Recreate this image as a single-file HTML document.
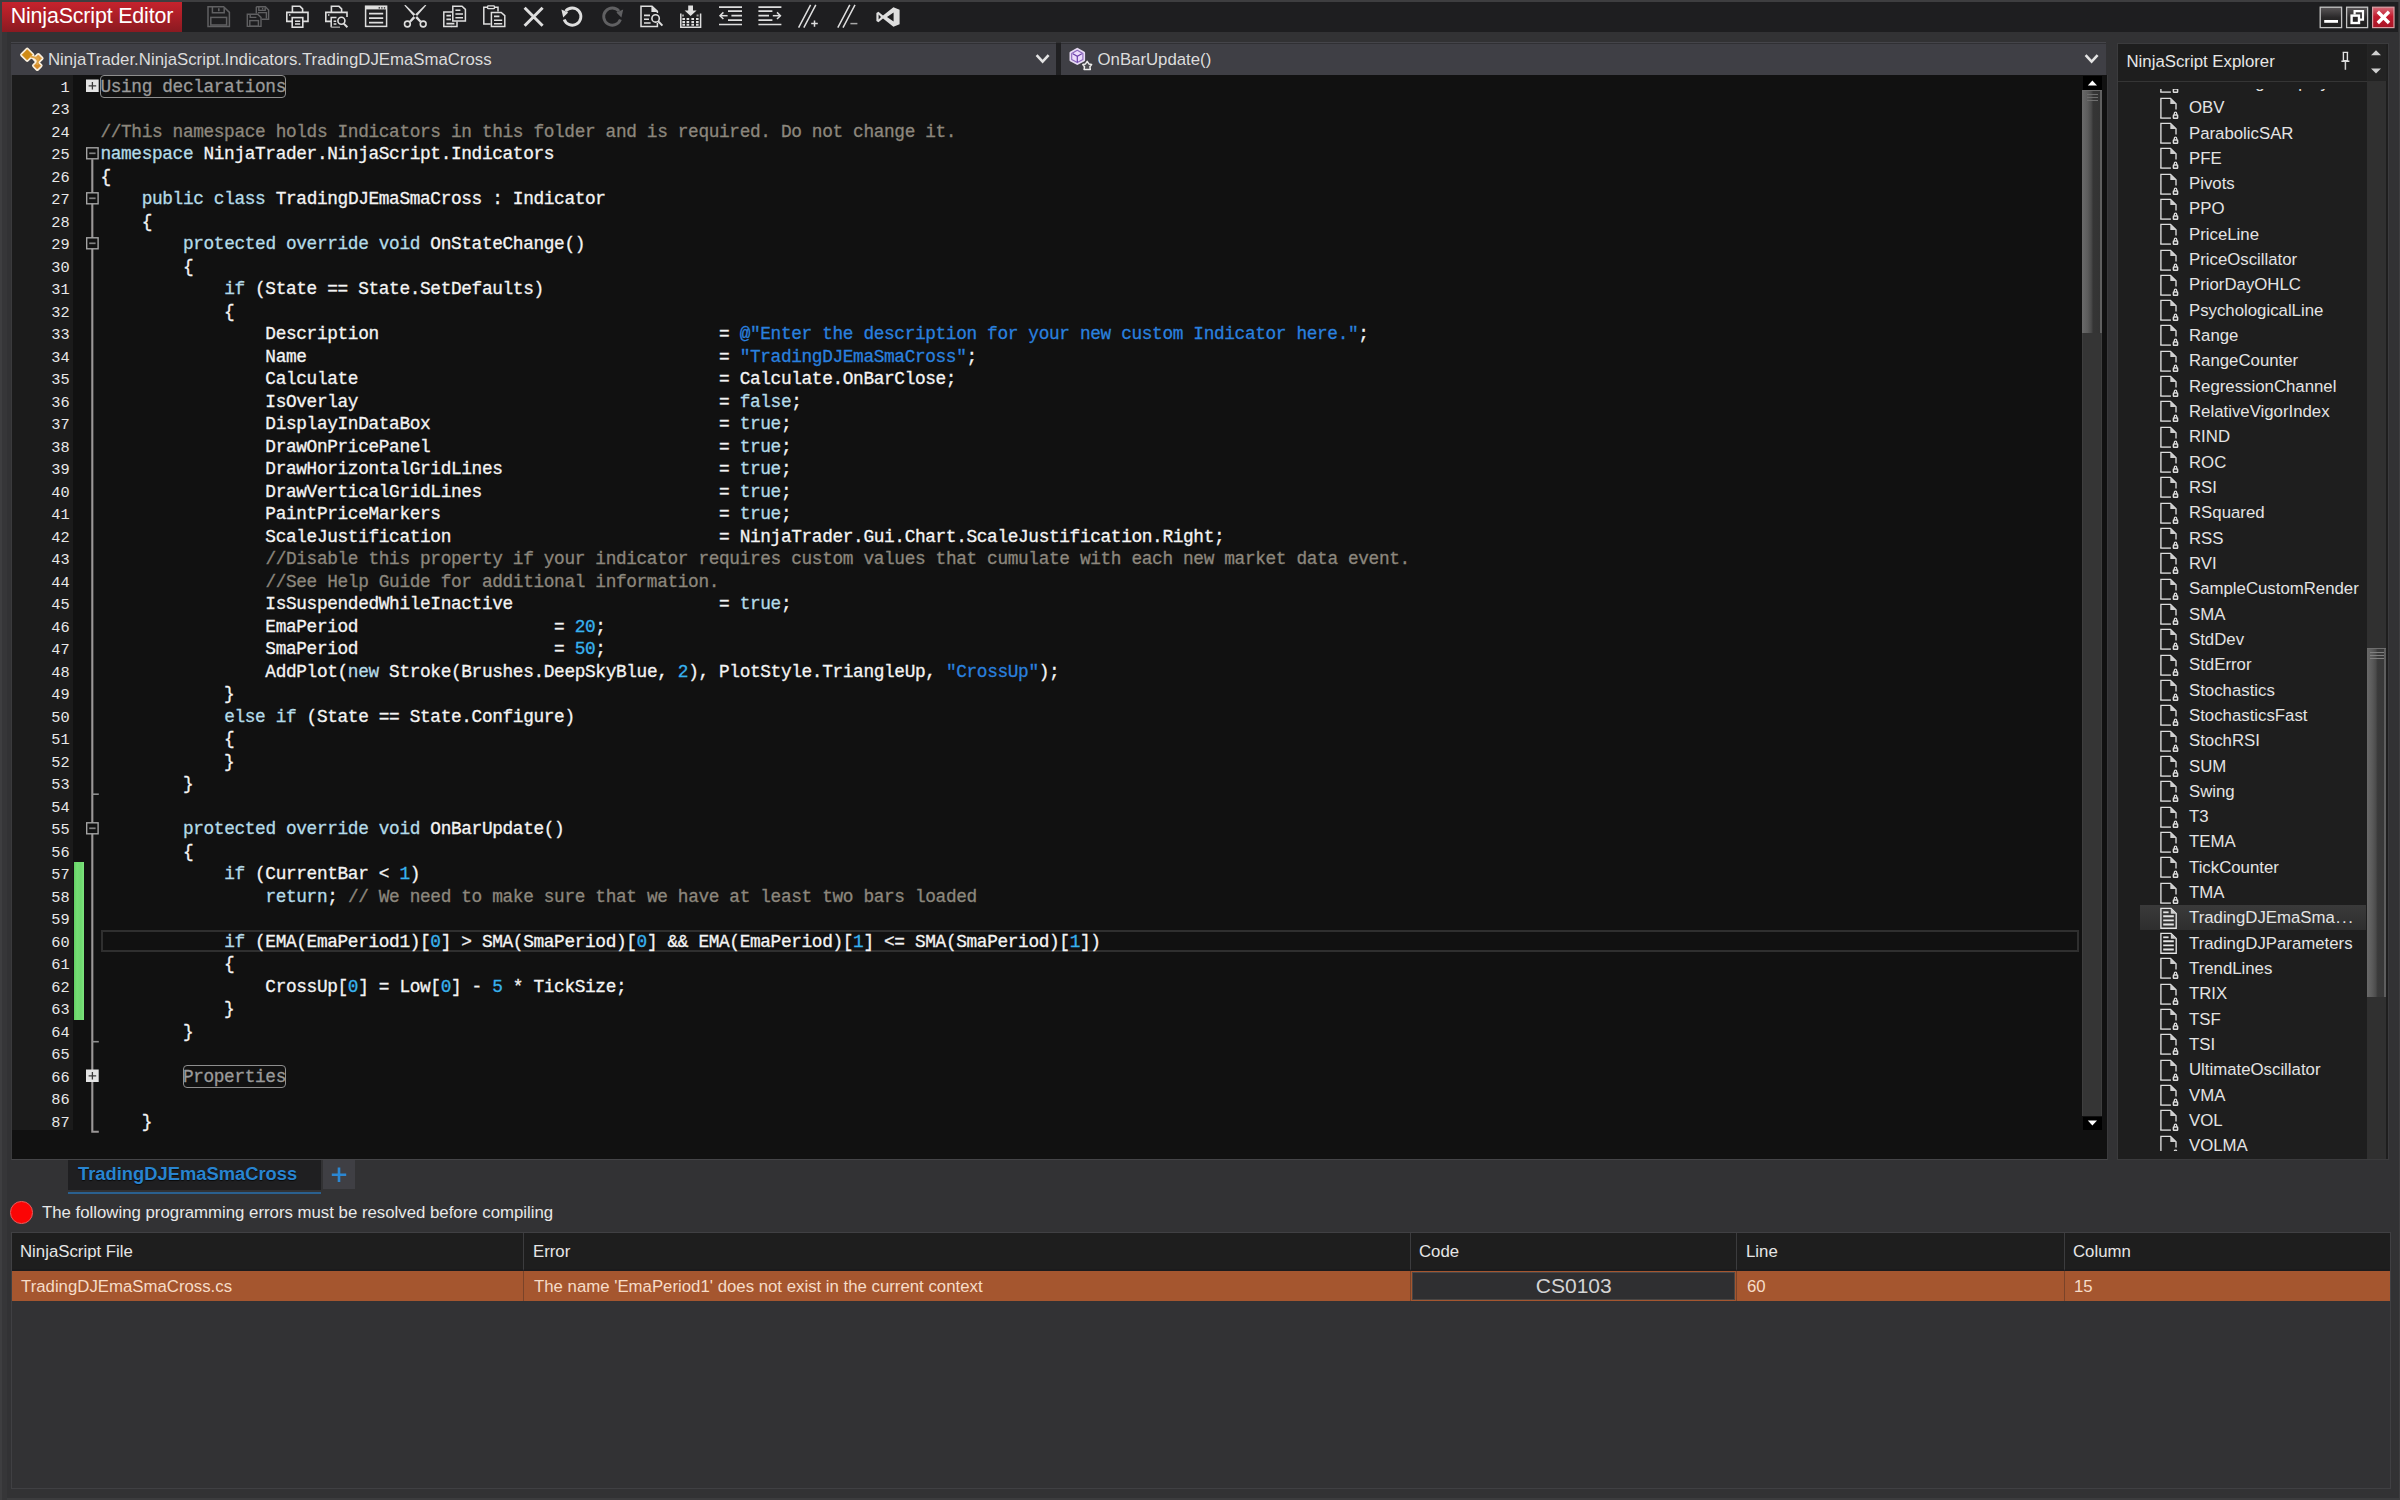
<!DOCTYPE html>
<html lang="en">
<head>
<meta charset="utf-8">
<title>NinjaScript Editor</title>
<style>
*{box-sizing:border-box;margin:0;padding:0}
html,body{width:2400px;height:1500px;overflow:hidden;background:#323234}
body{position:relative;font-family:"Liberation Sans",sans-serif;color:#e6e6e6;-webkit-font-smoothing:antialiased}
.abs{position:absolute}
#topstrip{left:0;top:0;width:2400px;height:2px;background:#3e3e40}
#leftstrip{left:0;top:0;width:2px;height:1500px;background:#3e3e40}
#leftstrip2{left:2px;top:32px;width:4.5px;height:1468px;background:#363638}
#rightstrip{left:2398.6px;top:0;width:1.4px;height:1500px;background:#3e3e40}
#botstrip{left:0;top:1498px;width:2400px;height:2px;background:#3c3c3e}
#titlebar{left:2px;top:2px;width:2396px;height:30px;background:#1e1e20}
#title{left:2px;top:2px;width:180px;height:30px;background:linear-gradient(#c5232d 0%,#b01f28 40%,#8a1a21 100%);color:#fff;font-size:21.4px;line-height:28.4px;padding-left:8.7px;white-space:nowrap;letter-spacing:-0.15px}
.dd{top:42px;height:33px;background:#3f3f45;border-top:1.4px solid #45454a;box-shadow:inset 0 1px 0 #303034;font-size:16.8px;line-height:33.4px;color:#dcdcdc;white-space:nowrap}
#dd1{left:11px;width:1045px}
#dd2{left:1061px;width:1045px}
#ddgap{left:1056px;top:43px;width:5px;height:32px;background:#202022}
#editor{left:11px;top:75px;width:2096.5px;height:1084.5px;background:#111111;border-left:1px solid #3a3a3c;border-right:1px solid #3a3a3c;border-bottom:1px solid #454548;overflow:hidden}
#gutter{left:12px;top:75px;width:61px;height:1055px;background:#1b1b1b}
.ln,.cl{position:absolute;font-family:"Liberation Mono","DejaVu Sans Mono",monospace;white-space:pre;height:22.5px;line-height:22.5px}
.cl{left:100.4px;font-size:17.800px;letter-spacing:-0.3598px;color:#f4f4f4;-webkit-text-stroke:0.3px}
.ln{left:12px;width:57.6px;text-align:right;font-size:15.3px;color:#e8e8e8}
.cl.f{color:#9a9a9a}
.k{color:#b4dbe8}.s{color:#2a80df}.n{color:#38b2ee}.c{color:#8c877d}
.fold{position:absolute;font-family:"Liberation Mono",monospace;white-space:pre;font-size:17.800px;line-height:22.5px;color:#999;border:1.6px solid #8e8e8e;border-radius:4px;height:22.6px}
.et{position:absolute;left:2189px;font-size:16.8px;line-height:20px;color:#e4e4e4;white-space:nowrap}
.eic{position:absolute;left:2159px}
.esel{position:absolute;left:2140px;width:226px;height:25.4px;background:linear-gradient(#3a3a3a,#2e2e2e)}
#explorer{left:2117px;top:42.5px;width:272px;height:1117.5px;background:#1e1e1e;border:1px solid #3b3b3d;overflow:hidden}
#exhead{left:2118px;top:43.5px;width:249px;height:38.4px;background:#1e1e1e;border-bottom:1.4px solid #353535;font-size:16.8px;line-height:36px;padding-left:8.5px;color:#e6e6e6}
#exclip{left:2118px;top:89.4px;width:249px;height:1061.6px;overflow:hidden}
#exclip > *{margin-left:-2118px;margin-top:-89.4px}
#exscroll{left:2366.8px;top:43.5px;width:19.6px;height:1115px;background:#303030}
#exthumb{left:2367.2px;top:648px;width:18.8px;height:348.5px;background:linear-gradient(90deg,#6a6a6a 0,#5a5a5a 28%,#4c4c4c 46%,#3a3a3a 56%,#383838 90%,#5e5e5e 92%,#5e5e5e 100%);border-top:1px solid #6e6e6e}
#vtrack{left:2082.3px;top:90px;width:19.8px;height:1026px;background:#353535;border-left:1px solid #3e3e3e;border-right:1px solid #3e3e3e}
#vthumb{left:2082.4px;top:90px;width:19.6px;height:243px;background:linear-gradient(90deg,#6a6a6a 0,#5c5c5c 28%,#4a4a4a 46%,#353535 56%,#333 90%,#606060 92%,#606060 100%);border-top:1px solid #6a6a6a}
.sbtn{left:2083px;width:18.5px;height:13.5px;background:#000}
#tab{left:68px;top:1159.5px;width:253px;height:30.5px;background:#1f1f21;color:#2884d0;text-shadow:0 1px 1px rgba(0,0,0,.7);font-weight:bold;font-size:18.35px;line-height:28px;padding-left:10px;white-space:nowrap}
#tabline{left:68px;top:1192px;width:253px;height:1.5px;background:#2a608f}
#plustab{left:323px;top:1160px;width:32px;height:29px;background:#3f3f44}
#errdot{left:10px;top:1201px;width:22.5px;height:22.5px;border-radius:50%;background:#fb0505;border:1.5px solid #e85c5c}
#errmsg{left:42px;top:1203px;font-size:16.8px;line-height:20px;color:#e8e8e8;white-space:nowrap}
#grid{left:10.6px;top:1232.2px;width:2380.4px;height:257.2px;border:1px solid #404043;background:#323234}
.th{position:absolute;top:1233.2px;height:38px;background:#1e1e1e;font-size:16.8px;line-height:38.4px;color:#e6e6e6;padding-left:8px;border-right:1px solid #3c3c3e;border-bottom:2.4px solid #1b1b1d}
.td{position:absolute;top:1271.2px;height:29.8px;background:#a5562f;font-size:16.8px;line-height:31.2px;color:#f6dcc8;padding-left:9px;border-right:1px solid #7a4329;white-space:nowrap}
#codecell{left:1412.4px;top:1271.6px;width:322.8px;height:28.6px;background:#2f2f31;border:1px solid #4a4644;border-top:1.5px solid #48484a;color:#d4d4d4;font-size:21px;line-height:26px;text-align:center;position:absolute}
#curline{left:101px;top:929.5px;width:1978px;height:22px;border:2px solid #2f2f2f;background:#111}
#greenbar{left:73.8px;top:862.2px;width:9.9px;height:157.6px;background:linear-gradient(90deg,#63cf63,#74de74 30%,#6ed86e 70%,#7ee47e)}
</style>
</head>
<body>
<svg width="0" height="0" style="position:absolute">
<defs>
<g id="il" fill="none" stroke="#dedede" stroke-width="1.35">
<path d="M1.9,21.1V1.3H11.5L17,6.8V12.6"/><path d="M11.3,1.6V7H16.8Z" fill="#cfcfcf" stroke="none"/><path d="M1.2,21.1H11.9"/>
<rect x="14.4" y="18.1" width="4.2" height="3.2" rx="0.5" stroke-width="1.5"/><path d="M15.3,17.8V16.4a1.2,1.2 0 0 1 2.4,0V17.8" stroke-width="1.3"/>
</g>
<g id="iu" fill="none" stroke="#e4e4e4" stroke-width="1.35">
<path d="M1.9,21.2V1.4H12L17.2,6.6V21.2Z"/><path d="M11.8,1.7V6.8H16.9Z" fill="#cfcfcf" stroke="none"/>
<path d="M4.2,9.2H14.8M4.2,13.4H14.8M4.2,17.5H14.8" stroke-width="1.9"/><path d="M4.2,5.3H9.6" stroke-width="1.8"/>
</g>
</defs>
</svg>

<div id="topstrip" class="abs"></div>
<div id="botstrip" class="abs"></div>
<div id="titlebar" class="abs"></div>
<div id="title" class="abs">NinjaScript Editor</div>
<div id="leftstrip" class="abs"></div>
<div id="leftstrip2" class="abs"></div>
<div id="rightstrip" class="abs"></div>

<svg class="abs" style="left:0;top:0" width="2400" height="34" viewBox="0 0 2400 34" fill="none" stroke-linejoin="miter">
<!-- 1 save (disabled) -->
<g stroke="#606062" stroke-width="1.5">
<path d="M208,6.8H223.6L229.4,12.4V26.4H208Z"/>
<path d="M212.4,7V12.8H224.2V8"/>
<path d="M218.8,8.2V11.2" stroke-width="1.6"/>
<rect x="210.8" y="17.4" width="15.8" height="7.6"/>
</g>
<!-- 2 save all (disabled) -->
<g stroke="#606062" stroke-width="1.4">
<path d="M256.3,6.8H265.4L268.6,10V19.2H261.5"/><path d="M256.3,6.8V13.6"/>
<path d="M258.8,7V10.4H265.2V7.6"/><path d="M262.6,7.8V9.6"/>
<path d="M258.6,13.6V12.6H266.4V18.6"/>
<path d="M247.3,14.2H257.6L261,17.4V26.4H247.3Z"/>
<path d="M250.2,14.4V17.4H256.4"/>
<rect x="249.8" y="20.6" width="8.6" height="5.6"/>
</g>
<!-- 3 print -->
<g stroke="#dedede" stroke-width="1.6">
<path d="M292.4,12V6.3H300L302.6,8.8V12"/>
<path d="M292,21.4H286.8V12.4H308V21.4H303"/>
<rect x="292.2" y="17.6" width="10.6" height="9.6"/>
<path d="M295,21.3H300.2M295,24H300.2" stroke-width="1.5"/>
<path d="M289,15H290.4" stroke-width="1.4"/>
</g>
<!-- 4 print preview -->
<g stroke="#dedede" stroke-width="1.6">
<path d="M331.4,12V6.3H339L341.6,8.8V12"/>
<path d="M331,21.4H325.8V12.4H347V17"/>
<path d="M328,15H329.4" stroke-width="1.4"/>
<path d="M331.2,27.2V17.6H336.5" stroke-width="1.5"/>
<path d="M331.2,27.2H340" stroke-width="1.4" stroke="#9a9a9a"/>
<path d="M333.6,21.2H336.2M333.6,24H336.4" stroke-width="1.4"/>
<circle cx="341.4" cy="20.8" r="3.5" stroke-width="1.6"/>
<path d="M343.8,23.6L347.4,27.2" stroke-width="2"/>
</g>
<!-- 5 window list -->
<g stroke="#dedede" stroke-width="1.5">
<rect x="365.6" y="6.2" width="21" height="20.2"/>
<rect x="365.6" y="6.2" width="21" height="3.2" fill="#dedede" stroke="none"/>
<path d="M378.6,7.8H380M381.2,7.8H382.6M383.8,7.8H385.2" stroke-width="1.3" stroke="#1e1e20"/>
<path d="M369,13.6H383.2M369,18.1H383.2M369,22.6H383.2" stroke-width="1.7"/>
</g>
<!-- 6 scissors -->
<g stroke="#dedede">
<path d="M404.2,5.2L405.6,5L416.6,15.4L421.4,21L419.6,22.2L414.6,17.2ZM426.4,5.2L425,5L414,15.4L409.2,21L411,22.2L416,17.2Z" fill="#dedede" stroke="none"/>
<circle cx="407.4" cy="24" r="2.9" stroke-width="1.6"/>
<circle cx="423.2" cy="24" r="2.9" stroke-width="1.6"/>
</g>
<!-- 7 copy -->
<g stroke="#dedede" stroke-width="1.5">
<path d="M451.6,26.6H443.8V12H452"/>
<path d="M446.4,15.6H451M446.4,19.4H451M446.4,23.6H454.4" stroke-width="1.6"/>
<path d="M457,21.4V26.6H451"/>
<path d="M452.8,6.3H462L465.4,9.4V21H452.8Z" fill="#1e1e20"/>
<path d="M455.4,10.2H460.4M455.4,14H463M455.4,17.8H463" stroke-width="1.6"/>
</g>
<!-- 8 paste -->
<g stroke="#dedede" stroke-width="1.5">
<path d="M487.4,7.2H483.8V24H490.6"/>
<path d="M494.6,7.2H498V11.4"/>
<rect x="487.6" y="5.9" width="6.8" height="2.8" rx="0.6" stroke-width="1.3"/>
<path d="M491.4,12.4H501.2L504.8,15.6V26.6H491.4Z"/>
<path d="M494,16.4H499.4M494,20.2H502.2M494,23.8H502.2" stroke-width="1.6"/>
</g>
<!-- 9 delete X -->
<path d="M524.6,7.8L542.6,25.8M542.6,7.8L524.6,25.8" stroke="#dedede" stroke-width="3"/>
<!-- 10 undo -->
<g stroke="#dedede">
<path d="M565.6,11.2A8.6,8.6 0 1 1 564.2,19.6" stroke-width="2.9"/>
<path d="M561.4,9.6L568.2,12.6L563.2,17.4Z" fill="#dedede" stroke="none"/>
</g>
<!-- 11 redo (disabled) -->
<g stroke="#606062">
<path d="M619,11.2A8.6,8.6 0 1 0 620.4,19.6" stroke-width="2.9"/>
<path d="M623.2,9.6L616.4,12.6L621.4,17.4Z" fill="#606062" stroke="none"/>
</g>
<!-- 12 find in doc -->
<g stroke="#dedede" stroke-width="1.5">
<path d="M657.4,23V26.4H641V6.2H652L657.4,11.4V13"/>
<path d="M652,6.4V11.4H657" stroke-width="1.2" fill="#dedede"/>
<path d="M644,15.4H650M644,19.2H649M644,23H650.6" stroke-width="1.6"/>
<circle cx="655.6" cy="18.4" r="3.7" stroke-width="1.6"/>
<path d="M658.2,21.2L662.4,25.6" stroke-width="2"/>
</g>
<!-- 13 insert snippet -->
<g stroke="#dedede" stroke-width="1.5">
<path d="M688.2,5.4H693V10.4H696.6L690.6,16L684.6,10.4H688.2Z" fill="#dedede" stroke="none"/>
<path d="M680.8,13.4V27.2H700.6V13.4"/>
<path d="M683,14.4V16.4M697.6,14.4V16.4" stroke-width="2" stroke="#9c9c9c"/>
<path d="M682.4,19H685M686.6,19H689.2M691.4,19H694M696,19H698.6M682.4,22H685M686.6,22H689.2M691.4,22H694M696,22H698.6M682.4,24.8H685M686.6,24.8H689.2M691.4,24.8H694M696,24.8H698.6" stroke-width="1.9"/>
</g>
<!-- 14 outdent -->
<g stroke="#dedede" stroke-width="1.7">
<path d="M719,7.2H742M728,11.2H742M731.4,15.7H742M728,20.1H742M719,24.5H742"/>
<path d="M720,15.7H727.6" stroke-width="1.5"/>
<path d="M723.4,12.4L720,15.7L723.4,19" stroke-width="1.5"/>
</g>
<!-- 15 indent -->
<g stroke="#dedede" stroke-width="1.7">
<path d="M758.4,7.2H781.4M758.4,11.2H772.4M758.4,15.7H769M758.4,20.1H772.4M758.4,24.5H781.4"/>
<path d="M772.8,15.7H780.4" stroke-width="1.5"/>
<path d="M777,12.4L780.4,15.7L777,19" stroke-width="1.5"/>
</g>
<!-- 16 comment + -->
<g stroke="#dedede" stroke-width="1.5">
<path d="M798.6,27.6L810.6,4.8M803.8,27.6L815.8,4.8"/>
<path d="M811.2,23.6H817.8M814.5,20.4V26.8" stroke-width="1.5"/>
</g>
<!-- 17 comment - -->
<g stroke="#dedede" stroke-width="1.5">
<path d="M837.8,27.6L849.8,4.8M843,27.6L855,4.8"/>
<path d="M850.4,23.6H857.4" stroke-width="1.5" stroke="#a8a8a8"/>
</g>
<!-- 18 visual studio -->
<g>
<path d="M893.4,7.2L899.6,9.8V24.2L893.4,26.8L883,18.6L878.4,22.2L876.4,21V13L878.4,11.8L883,15.4ZM893.6,12.6L887,17L893.6,21.4ZM878.6,14.6V19.4L881,17Z" fill="#dedede" fill-rule="evenodd"/>
</g>
<!-- window buttons -->
<defs>
<linearGradient id="wb" x1="0" y1="0" x2="0" y2="1"><stop offset="0" stop-color="#5a5658"/><stop offset="0.5" stop-color="#2a2829"/><stop offset="1" stop-color="#1c1c1c"/></linearGradient>
<linearGradient id="wc" x1="0" y1="0" x2="0" y2="1"><stop offset="0" stop-color="#d56a78"/><stop offset="0.45" stop-color="#c41a2e"/><stop offset="1" stop-color="#a81526"/></linearGradient>
</defs>
<rect x="2320.2" y="7.2" width="21.4" height="20.4" fill="url(#wb)" stroke="#c4c4c4" stroke-width="1.3"/>
<rect x="2324.2" y="20" width="13.8" height="2.8" fill="#fff"/>
<rect x="2346.6" y="7.2" width="21" height="20.4" fill="url(#wb)" stroke="#c4c4c4" stroke-width="1.3"/>
<path d="M2354.6,14.6V11.2H2363V19.6H2359.4" stroke="#fff" stroke-width="2.2"/>
<rect x="2351.6" y="15.6" width="7.4" height="7.4" stroke="#fff" stroke-width="2.4"/>
<rect x="2372.6" y="7.2" width="21.4" height="20.4" fill="url(#wc)" stroke="#d9a0a6" stroke-width="1.2"/>
<path d="M2377.8,11.8L2389,23M2389,11.8L2377.8,23" stroke="#fff" stroke-width="3.4"/>
</svg>


<div id="dd1" class="abs dd"><span style="position:absolute;left:37px">NinjaTrader.NinjaScript.Indicators.TradingDJEmaSmaCross</span></div>
<div id="ddgap" class="abs"></div>
<div id="dd2" class="abs dd"><span style="position:absolute;left:36.5px">OnBarUpdate()</span></div>
<svg class="abs" style="left:0;top:43px" width="2400" height="32" viewBox="0 43 2400 32" fill="none">
<!-- class icon -->
<g stroke="#fbf0de" stroke-width="3.8" stroke-linejoin="round" stroke-linecap="round" fill="#fbf0de">
<path d="M27.2,49.6L32.4,54.8L27.2,60L22,54.8Z"/>
<path d="M38.3,54.9L41.7,58.3L38.3,61.7L34.9,58.3Z"/>
<path d="M37.3,62.3L40.7,65.7L37.3,69.1L33.9,65.7Z"/>
<path d="M30,56.4L38,58.3L37.3,65"/>
</g>
<g stroke-linejoin="round">
<path d="M27.2,49.6L32.4,54.8L27.2,60L22,54.8Z" fill="#cf8a14" stroke="#cf8a14" stroke-width="0.6"/>
<path d="M38.3,54.9L41.7,58.3L38.3,61.7L34.9,58.3Z" fill="#d9963a" stroke="#d9963a" stroke-width="0.6"/>
<path d="M37.3,62.3L40.7,65.7L37.3,69.1L33.9,65.7Z" fill="#d48a28" stroke="#d48a28" stroke-width="0.6"/>
<path d="M30,56.4L38,58.3L37.3,65" stroke-width="2" fill="none" stroke="#e0a545"/>
</g>
<path d="M1036.6,55.2L1042.6,61.6L1048.6,55.2" stroke="#e4e4e4" stroke-width="2.6"/>
<!-- method icon -->
<g>
<path d="M1077.3,48.9L1084,52.7V60.2L1077.3,63.9L1070.6,60.2V52.7Z" fill="#ecdcfb" stroke="#e6daf3" stroke-width="2.2" stroke-linejoin="round"/>
<path d="M1077.3,50.2L1082.9,53.4V59.5L1077.3,62.6L1071.7,59.5V53.4Z" fill="#ecdcfb" stroke="#8a66bc" stroke-width="1.1" stroke-linejoin="round"/>
<path d="M1072.8,53.8L1077.3,56.3L1081.8,53.8M1077.3,56.3V62.2" stroke="#6a3fa8" stroke-width="1.2"/>
<path d="M1087.2,61.4L1088.9,63.9L1091.6,64.5L1089.9,66.7L1090.3,69.5H1084.1L1084.5,66.7L1082.8,64.5L1085.5,63.9Z" fill="#4c4c50" stroke="#ececec" stroke-width="1.5" stroke-linejoin="round"/>
</g>
<path d="M2085.6,55.2L2091.6,61.6L2097.6,55.2" stroke="#e4e4e4" stroke-width="2.6"/>
</svg>


<div id="editor" class="abs"></div>
<div id="gutter" class="abs"></div>
<div id="greenbar" class="abs"></div>
<div id="curline" class="abs"></div>
<svg class="abs" style="left:80px;top:75px" width="24" height="1070" viewBox="80 75 24 1070" fill="none">
<path d="M92.3,159.2V1131.7H98.8" stroke="#9a9797" stroke-width="2.1"/>
<path d="M92.3,794.2H98.8" stroke="#8e8e8e" stroke-width="1.6"/>
<path d="M92.3,1041.7H98.8" stroke="#8e8e8e" stroke-width="1.6"/>
<rect x="86.7" y="147.8" width="11.4" height="11" fill="#111" stroke="#a4a4a4" stroke-width="1.4"/>
<path d="M89.2,153.3H95.6" stroke="#808080" stroke-width="1.7"/>
<rect x="86.7" y="192.8" width="11.4" height="11" fill="#111" stroke="#a4a4a4" stroke-width="1.4"/>
<path d="M89.2,198.3H95.6" stroke="#808080" stroke-width="1.7"/>
<rect x="86.7" y="237.8" width="11.4" height="11" fill="#111" stroke="#a4a4a4" stroke-width="1.4"/>
<path d="M89.2,243.3H95.6" stroke="#808080" stroke-width="1.7"/>
<rect x="86.7" y="822.8" width="11.4" height="11" fill="#111" stroke="#a4a4a4" stroke-width="1.4"/>
<path d="M89.2,828.3H95.6" stroke="#808080" stroke-width="1.7"/>
<rect x="86" y="79.5" width="12.7" height="12.5" fill="#e4e4e4"/>
<path d="M88.6,85.8H96.2M92.4,82.0V89.6" stroke="#3a3a3a" stroke-width="1.3"/>
<rect x="86" y="1069.5" width="12.7" height="12.5" fill="#e4e4e4"/>
<path d="M88.6,1075.8H96.2M92.4,1072.0V1079.6" stroke="#3a3a3a" stroke-width="1.3"/>
</svg>
<div class="fold" style="left:99.8px;top:75.3px;width:186.6px"></div>
<div class="fold" style="left:183px;top:1065px;width:103.4px"></div>
<div class="ln" style="top:76.77px">1</div>
<div class="cl f" style="top:76.10px">Using declarations</div>
<div class="ln" style="top:98.77px">23</div>
<div class="ln" style="top:121.77px">24</div>
<div class="cl" style="top:121.10px"><span class="c">//This namespace holds Indicators in this folder and is required. Do not change it.</span></div>
<div class="ln" style="top:143.77px">25</div>
<div class="cl" style="top:143.10px"><span class="k">namespace</span> NinjaTrader.NinjaScript.Indicators</div>
<div class="ln" style="top:166.77px">26</div>
<div class="cl" style="top:166.10px">{</div>
<div class="ln" style="top:188.77px">27</div>
<div class="cl" style="top:188.10px">    <span class="k">public</span> <span class="k">class</span> TradingDJEmaSmaCross : Indicator</div>
<div class="ln" style="top:211.77px">28</div>
<div class="cl" style="top:211.10px">    {</div>
<div class="ln" style="top:233.77px">29</div>
<div class="cl" style="top:233.10px">        <span class="k">protected</span> <span class="k">override</span> <span class="k">void</span> OnStateChange()</div>
<div class="ln" style="top:256.77px">30</div>
<div class="cl" style="top:256.10px">        {</div>
<div class="ln" style="top:278.77px">31</div>
<div class="cl" style="top:278.10px">            <span class="k">if</span> (State == State.SetDefaults)</div>
<div class="ln" style="top:301.77px">32</div>
<div class="cl" style="top:301.10px">            {</div>
<div class="ln" style="top:323.77px">33</div>
<div class="cl" style="top:323.10px">                Description                                 = <span class="s">@&quot;Enter the description for your new custom Indicator here.&quot;</span>;</div>
<div class="ln" style="top:346.77px">34</div>
<div class="cl" style="top:346.10px">                Name                                        = <span class="s">&quot;TradingDJEmaSmaCross&quot;</span>;</div>
<div class="ln" style="top:368.77px">35</div>
<div class="cl" style="top:368.10px">                Calculate                                   = Calculate.OnBarClose;</div>
<div class="ln" style="top:391.77px">36</div>
<div class="cl" style="top:391.10px">                IsOverlay                                   = <span class="k">false</span>;</div>
<div class="ln" style="top:413.77px">37</div>
<div class="cl" style="top:413.10px">                DisplayInDataBox                            = <span class="k">true</span>;</div>
<div class="ln" style="top:436.77px">38</div>
<div class="cl" style="top:436.10px">                DrawOnPricePanel                            = <span class="k">true</span>;</div>
<div class="ln" style="top:458.77px">39</div>
<div class="cl" style="top:458.10px">                DrawHorizontalGridLines                     = <span class="k">true</span>;</div>
<div class="ln" style="top:481.77px">40</div>
<div class="cl" style="top:481.10px">                DrawVerticalGridLines                       = <span class="k">true</span>;</div>
<div class="ln" style="top:503.77px">41</div>
<div class="cl" style="top:503.10px">                PaintPriceMarkers                           = <span class="k">true</span>;</div>
<div class="ln" style="top:526.77px">42</div>
<div class="cl" style="top:526.10px">                ScaleJustification                          = NinjaTrader.Gui.Chart.ScaleJustification.Right;</div>
<div class="ln" style="top:548.77px">43</div>
<div class="cl" style="top:548.10px">                <span class="c">//Disable this property if your indicator requires custom values that cumulate with each new market data event.</span></div>
<div class="ln" style="top:571.77px">44</div>
<div class="cl" style="top:571.10px">                <span class="c">//See Help Guide for additional information.</span></div>
<div class="ln" style="top:593.77px">45</div>
<div class="cl" style="top:593.10px">                IsSuspendedWhileInactive                    = <span class="k">true</span>;</div>
<div class="ln" style="top:616.77px">46</div>
<div class="cl" style="top:616.10px">                EmaPeriod                   = <span class="n">20</span>;</div>
<div class="ln" style="top:638.77px">47</div>
<div class="cl" style="top:638.10px">                SmaPeriod                   = <span class="n">50</span>;</div>
<div class="ln" style="top:661.77px">48</div>
<div class="cl" style="top:661.10px">                AddPlot(<span class="k">new</span> Stroke(Brushes.DeepSkyBlue, <span class="n">2</span>), PlotStyle.TriangleUp, <span class="s">&quot;CrossUp&quot;</span>);</div>
<div class="ln" style="top:683.77px">49</div>
<div class="cl" style="top:683.10px">            }</div>
<div class="ln" style="top:706.77px">50</div>
<div class="cl" style="top:706.10px">            <span class="k">else</span> <span class="k">if</span> (State == State.Configure)</div>
<div class="ln" style="top:728.77px">51</div>
<div class="cl" style="top:728.10px">            {</div>
<div class="ln" style="top:751.77px">52</div>
<div class="cl" style="top:751.10px">            }</div>
<div class="ln" style="top:773.77px">53</div>
<div class="cl" style="top:773.10px">        }</div>
<div class="ln" style="top:796.77px">54</div>
<div class="ln" style="top:818.77px">55</div>
<div class="cl" style="top:818.10px">        <span class="k">protected</span> <span class="k">override</span> <span class="k">void</span> OnBarUpdate()</div>
<div class="ln" style="top:841.77px">56</div>
<div class="cl" style="top:841.10px">        {</div>
<div class="ln" style="top:863.77px">57</div>
<div class="cl" style="top:863.10px">            <span class="k">if</span> (CurrentBar &lt; <span class="n">1</span>)</div>
<div class="ln" style="top:886.77px">58</div>
<div class="cl" style="top:886.10px">                <span class="k">return</span>; <span class="c">// We need to make sure that we have at least two bars loaded</span></div>
<div class="ln" style="top:908.77px">59</div>
<div class="ln" style="top:931.77px">60</div>
<div class="cl" style="top:931.10px">            <span class="k">if</span> (EMA(EmaPeriod1)[<span class="n">0</span>] &gt; SMA(SmaPeriod)[<span class="n">0</span>] &amp;&amp; EMA(EmaPeriod)[<span class="n">1</span>] &lt;= SMA(SmaPeriod)[<span class="n">1</span>])</div>
<div class="ln" style="top:953.77px">61</div>
<div class="cl" style="top:953.10px">            {</div>
<div class="ln" style="top:976.77px">62</div>
<div class="cl" style="top:976.10px">                CrossUp[<span class="n">0</span>] = Low[<span class="n">0</span>] - <span class="n">5</span> * TickSize;</div>
<div class="ln" style="top:998.77px">63</div>
<div class="cl" style="top:998.10px">            }</div>
<div class="ln" style="top:1021.77px">64</div>
<div class="cl" style="top:1021.10px">        }</div>
<div class="ln" style="top:1043.77px">65</div>
<div class="ln" style="top:1066.77px">66</div>
<div class="cl f" style="top:1066.10px">        Properties</div>
<div class="ln" style="top:1088.77px">86</div>
<div class="ln" style="top:1111.77px">87</div>
<div class="cl" style="top:1111.10px">    }</div>

<div id="vtrack" class="abs"></div>
<div id="vthumb" class="abs"></div>
<div class="abs sbtn" style="top:76px"></div>
<div class="abs sbtn" style="top:1116.5px"></div>
<svg class="abs" style="left:2080px;top:75px" width="26" height="1060" viewBox="2080 75 26 1060">
<path d="M2087.8,85.4L2092.4,80.6L2097,85.4Z" fill="#fff"/>
<path d="M2087.8,1120.4L2092.4,1125.4L2097,1120.4Z" fill="#fff"/>
<path d="M2087,94.5H2098M2087,97.5H2098M2087,100.5H2098" stroke="#6e6e6e" stroke-width="1"/>
</svg>

<div id="explorer" class="abs"></div>
<div id="exscroll" class="abs"></div>
<div id="exthumb" class="abs"></div>
<div id="exhead" class="abs">NinjaScript Explorer</div>
<div id="exclip" class="abs">
<svg class="eic" style="top:71.28px" width="20" height="23" viewBox="0 0 20 23"><use href="#il"/></svg>
<div class="et" style="top:72.88px">NetChangeDisplay</div>
<svg class="eic" style="top:96.60px" width="20" height="23" viewBox="0 0 20 23"><use href="#il"/></svg>
<div class="et" style="top:98.20px">OBV</div>
<svg class="eic" style="top:121.92px" width="20" height="23" viewBox="0 0 20 23"><use href="#il"/></svg>
<div class="et" style="top:123.52px">ParabolicSAR</div>
<svg class="eic" style="top:147.24px" width="20" height="23" viewBox="0 0 20 23"><use href="#il"/></svg>
<div class="et" style="top:148.84px">PFE</div>
<svg class="eic" style="top:172.56px" width="20" height="23" viewBox="0 0 20 23"><use href="#il"/></svg>
<div class="et" style="top:174.16px">Pivots</div>
<svg class="eic" style="top:197.88px" width="20" height="23" viewBox="0 0 20 23"><use href="#il"/></svg>
<div class="et" style="top:199.48px">PPO</div>
<svg class="eic" style="top:223.20px" width="20" height="23" viewBox="0 0 20 23"><use href="#il"/></svg>
<div class="et" style="top:224.80px">PriceLine</div>
<svg class="eic" style="top:248.52px" width="20" height="23" viewBox="0 0 20 23"><use href="#il"/></svg>
<div class="et" style="top:250.12px">PriceOscillator</div>
<svg class="eic" style="top:273.84px" width="20" height="23" viewBox="0 0 20 23"><use href="#il"/></svg>
<div class="et" style="top:275.44px">PriorDayOHLC</div>
<svg class="eic" style="top:299.16px" width="20" height="23" viewBox="0 0 20 23"><use href="#il"/></svg>
<div class="et" style="top:300.76px">PsychologicalLine</div>
<svg class="eic" style="top:324.48px" width="20" height="23" viewBox="0 0 20 23"><use href="#il"/></svg>
<div class="et" style="top:326.08px">Range</div>
<svg class="eic" style="top:349.80px" width="20" height="23" viewBox="0 0 20 23"><use href="#il"/></svg>
<div class="et" style="top:351.40px">RangeCounter</div>
<svg class="eic" style="top:375.12px" width="20" height="23" viewBox="0 0 20 23"><use href="#il"/></svg>
<div class="et" style="top:376.72px">RegressionChannel</div>
<svg class="eic" style="top:400.44px" width="20" height="23" viewBox="0 0 20 23"><use href="#il"/></svg>
<div class="et" style="top:402.04px">RelativeVigorIndex</div>
<svg class="eic" style="top:425.76px" width="20" height="23" viewBox="0 0 20 23"><use href="#il"/></svg>
<div class="et" style="top:427.36px">RIND</div>
<svg class="eic" style="top:451.08px" width="20" height="23" viewBox="0 0 20 23"><use href="#il"/></svg>
<div class="et" style="top:452.68px">ROC</div>
<svg class="eic" style="top:476.40px" width="20" height="23" viewBox="0 0 20 23"><use href="#il"/></svg>
<div class="et" style="top:478.00px">RSI</div>
<svg class="eic" style="top:501.72px" width="20" height="23" viewBox="0 0 20 23"><use href="#il"/></svg>
<div class="et" style="top:503.32px">RSquared</div>
<svg class="eic" style="top:527.04px" width="20" height="23" viewBox="0 0 20 23"><use href="#il"/></svg>
<div class="et" style="top:528.64px">RSS</div>
<svg class="eic" style="top:552.36px" width="20" height="23" viewBox="0 0 20 23"><use href="#il"/></svg>
<div class="et" style="top:553.96px">RVI</div>
<svg class="eic" style="top:577.68px" width="20" height="23" viewBox="0 0 20 23"><use href="#il"/></svg>
<div class="et" style="top:579.28px">SampleCustomRender</div>
<svg class="eic" style="top:603.00px" width="20" height="23" viewBox="0 0 20 23"><use href="#il"/></svg>
<div class="et" style="top:604.60px">SMA</div>
<svg class="eic" style="top:628.32px" width="20" height="23" viewBox="0 0 20 23"><use href="#il"/></svg>
<div class="et" style="top:629.92px">StdDev</div>
<svg class="eic" style="top:653.64px" width="20" height="23" viewBox="0 0 20 23"><use href="#il"/></svg>
<div class="et" style="top:655.24px">StdError</div>
<svg class="eic" style="top:678.96px" width="20" height="23" viewBox="0 0 20 23"><use href="#il"/></svg>
<div class="et" style="top:680.56px">Stochastics</div>
<svg class="eic" style="top:704.28px" width="20" height="23" viewBox="0 0 20 23"><use href="#il"/></svg>
<div class="et" style="top:705.88px">StochasticsFast</div>
<svg class="eic" style="top:729.60px" width="20" height="23" viewBox="0 0 20 23"><use href="#il"/></svg>
<div class="et" style="top:731.20px">StochRSI</div>
<svg class="eic" style="top:754.92px" width="20" height="23" viewBox="0 0 20 23"><use href="#il"/></svg>
<div class="et" style="top:756.52px">SUM</div>
<svg class="eic" style="top:780.24px" width="20" height="23" viewBox="0 0 20 23"><use href="#il"/></svg>
<div class="et" style="top:781.84px">Swing</div>
<svg class="eic" style="top:805.56px" width="20" height="23" viewBox="0 0 20 23"><use href="#il"/></svg>
<div class="et" style="top:807.16px">T3</div>
<svg class="eic" style="top:830.88px" width="20" height="23" viewBox="0 0 20 23"><use href="#il"/></svg>
<div class="et" style="top:832.48px">TEMA</div>
<svg class="eic" style="top:856.20px" width="20" height="23" viewBox="0 0 20 23"><use href="#il"/></svg>
<div class="et" style="top:857.80px">TickCounter</div>
<svg class="eic" style="top:881.52px" width="20" height="23" viewBox="0 0 20 23"><use href="#il"/></svg>
<div class="et" style="top:883.12px">TMA</div>
<div class="esel" style="top:904.54px"></div>
<svg class="eic" style="top:906.84px" width="20" height="23" viewBox="0 0 20 23"><use href="#iu"/></svg>
<div class="et" style="top:908.44px">TradingDJEmaSma<span style="letter-spacing:1.6px;margin-left:1px">...</span></div>
<svg class="eic" style="top:932.16px" width="20" height="23" viewBox="0 0 20 23"><use href="#iu"/></svg>
<div class="et" style="top:933.76px">TradingDJParameters</div>
<svg class="eic" style="top:957.48px" width="20" height="23" viewBox="0 0 20 23"><use href="#il"/></svg>
<div class="et" style="top:959.08px">TrendLines</div>
<svg class="eic" style="top:982.80px" width="20" height="23" viewBox="0 0 20 23"><use href="#il"/></svg>
<div class="et" style="top:984.40px">TRIX</div>
<svg class="eic" style="top:1008.12px" width="20" height="23" viewBox="0 0 20 23"><use href="#il"/></svg>
<div class="et" style="top:1009.72px">TSF</div>
<svg class="eic" style="top:1033.44px" width="20" height="23" viewBox="0 0 20 23"><use href="#il"/></svg>
<div class="et" style="top:1035.04px">TSI</div>
<svg class="eic" style="top:1058.76px" width="20" height="23" viewBox="0 0 20 23"><use href="#il"/></svg>
<div class="et" style="top:1060.36px">UltimateOscillator</div>
<svg class="eic" style="top:1084.08px" width="20" height="23" viewBox="0 0 20 23"><use href="#il"/></svg>
<div class="et" style="top:1085.68px">VMA</div>
<svg class="eic" style="top:1109.40px" width="20" height="23" viewBox="0 0 20 23"><use href="#il"/></svg>
<div class="et" style="top:1111.00px">VOL</div>
<svg class="eic" style="top:1134.72px" width="20" height="23" viewBox="0 0 20 23"><use href="#il"/></svg>
<div class="et" style="top:1136.32px">VOLMA</div>
</div>
<svg class="abs" style="left:2330px;top:44px" width="60" height="40" viewBox="2330 44 60 40" fill="none">
<rect x="2367.2" y="44" width="19.2" height="37" fill="#232323"/>
<path d="M2342.6,52.4H2348.2M2343.4,52.4V60.6H2347.4V52.4M2341.4,61.2H2349.4" stroke="#e0e0e0" stroke-width="1.4"/>
<path d="M2345.4,61.4V69.8" stroke="#d0d0d0" stroke-width="1.5"/>
<path d="M2371,55.2L2376,50.2L2381,55.2Z" fill="#cfcfcf"/>
<path d="M2371,68.6L2376,73.6L2381,68.6Z" fill="#cfcfcf"/>
</svg>
<svg class="abs" style="left:2366px;top:640px" width="24" height="30" viewBox="2366 640 24 30">
<path d="M2370,652.5H2384M2370,655.5H2384M2370,658.5H2384" stroke="#808080" stroke-width="1"/>
</svg>

<div id="tab" class="abs">TradingDJEmaSmaCross</div>
<div id="tabline" class="abs"></div>
<div id="plustab" class="abs"></div>
<svg class="abs" style="left:323px;top:1160px" width="32" height="29"><path d="M16,7.5V22M8.8,14.7H23.2" stroke="#2b87d3" stroke-width="2.6" fill="none"/></svg>

<div id="errdot" class="abs"></div>
<div id="errmsg" class="abs">The following programming errors must be resolved before compiling</div>

<div id="grid" class="abs"></div>
<div class="th" style="left:12px;width:512px">NinjaScript File</div>
<div class="th" style="left:524px;width:887px;padding-left:9px">Error</div>
<div class="th" style="left:1411px;width:326px;padding-left:8px">Code</div>
<div class="th" style="left:1737px;width:328px;padding-left:9px">Line</div>
<div class="th" style="left:2065px;width:2325px;width:325px;padding-left:8px;border-right:none">Column</div>
<div class="td" style="left:12px;width:512px">TradingDJEmaSmaCross.cs</div>
<div class="td" style="left:524px;width:887px;padding-left:10px">The name 'EmaPeriod1' does not exist in the current context</div>
<div class="td" style="left:1411px;width:326px"></div>
<div class="td" style="left:1737px;width:328px;padding-left:10px">60</div>
<div class="td" style="left:2065px;width:325px;padding-left:9px;border-right:none">15</div>
<div id="codecell">CS0103</div>
</body>
</html>
